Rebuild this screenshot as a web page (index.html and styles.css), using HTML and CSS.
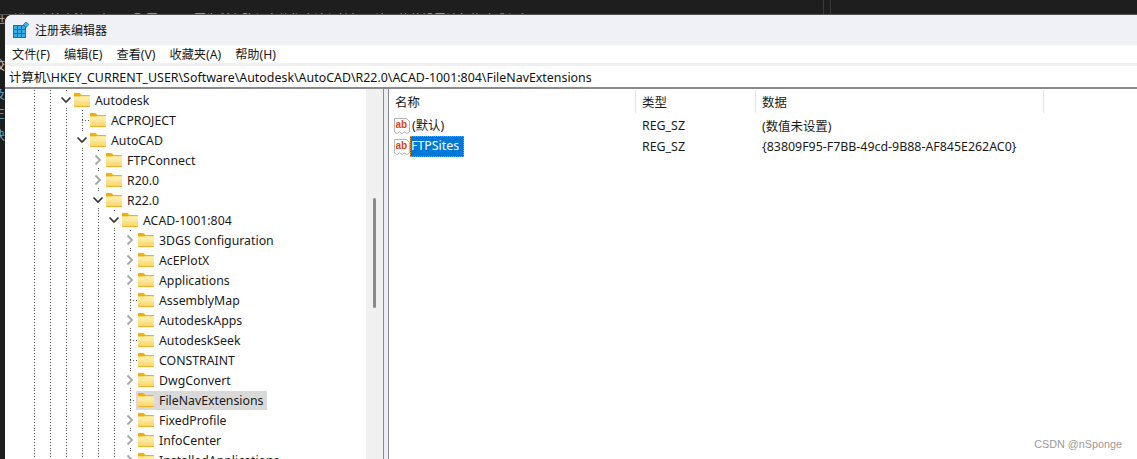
FILE: index.html
```html
<!DOCTYPE html>
<html lang="zh-CN">
<head>
<meta charset="utf-8">
<title>注册表编辑器</title>
<link rel="stylesheet" href="styles.css">
</head>
<body>
<svg class="defs" width="0" height="0" aria-hidden="true">
  <defs>
    <linearGradient id="fg" x1="0" y1="0" x2="0" y2="1">
      <stop offset="0" stop-color="#fff4bd"/>
      <stop offset="1" stop-color="#fbd362"/>
    </linearGradient>
    <symbol id="folder" viewBox="0 0 16 14">
      <path d="M0 1.2C0 .5.5 0 1.2 0h4.3l2 2H15c.6 0 1 .4 1 1v2H0z" fill="#f4b30f"/>
      <path d="M0 3.2h16V13c0 .6-.4 1-1 1H1c-.6 0-1-.4-1-1z" fill="url(#fg)"/>
      <path d="M0 13h16c0 .6-.4 1-1 1H1c-.6 0-1-.4-1-1z" fill="#efb22f"/>
      <path d="M0 3.2h6.5l1-1.2H5.5l-2-2H1.2C.5 0 0 .5 0 1.2z" fill="#f2ac05"/>
    </symbol>
    <symbol id="open" viewBox="0 0 12 12">
      <path d="M1.5 3.5 6 8l4.5-4.5" fill="none" stroke="#333" stroke-width="1.6"/>
    </symbol>
    <symbol id="closed" viewBox="0 0 12 12">
      <path d="M3.5 1.5 8 6l-4.5 4.5" fill="none" stroke="#a6a6a6" stroke-width="1.8"/>
    </symbol>
    <symbol id="ab" viewBox="0 0 16 16">
      <path d="M.5.5h12l3 3V14l-2.500 1.500L10.500 14 8 15.500 5.500 14 3 15.500.5 14z" fill="#fff" stroke="#b5b5b5"/>
      <text x="1.500" y="10" class="ab-text">ab</text>
    </symbol>
  </defs>
</svg>

<header class="backdrop">
  <p class="backdrop-text">进一步检查注册表项目配置显示，因为所有路径文件都应该保持相同结果的值设置请勿修改或保留配置项</p>
  <i class="backdrop-line"></i>
  <i class="backdrop-line second"></i>
</header>

<div class="desk">
  <aside class="edge">
    <span class="e1">进</span>
    <span class="e2">校</span>
    <span class="e3">及</span>
    <span class="e4">正</span>
    <span class="e5">块</span>
  </aside>

  <main class="window">
    <div class="titlebar">
      <svg class="app-icon" width="16" height="16" viewBox="0 0 16 16">
        <rect x="0" y="3" width="13" height="13" fill="#0a74c4"/>
        <g fill="#36ace8">
          <rect x="1" y="4" width="3" height="3"/><rect x="5" y="4" width="3" height="3"/><rect x="9" y="4" width="3" height="3"/>
          <rect x="1" y="8" width="3" height="3"/><rect x="5" y="8" width="3" height="3"/><rect x="9" y="8" width="3" height="3"/>
          <rect x="1" y="12" width="3" height="3"/><rect x="5" y="12" width="3" height="3"/><rect x="9" y="12" width="3" height="3"/>
        </g>
        <path d="M13 0l2.800 2.500L13 5.500 10.500 2.500z" fill="#3fb4ea" stroke="#0a74c4" stroke-width=".8"/>
      </svg>
      <span class="title">注册表编辑器</span>
    </div>
    <nav class="menubar">
      <span>文件(F)</span><span>编辑(E)</span><span>查看(V)</span><span>收藏夹(A)</span><span>帮助(H)</span>
    </nav>
    <div class="address">计算机\HKEY_CURRENT_USER\Software\Autodesk\AutoCAD\R22.0\ACAD-1001:804\FileNavExtensions</div>

    <div class="panes">
      <section class="tree">
        <div class="rows">
          <div class="row"><i class="g"></i><i class="g"></i><i class="tw"><svg><use href="#open"/></svg></i><span class="item"><svg class="fd"><use href="#folder"/></svg><span class="label">Autodesk</span></span></div>
          <div class="row"><i class="g"></i><i class="g"></i><i class="g"></i><i class="lf"></i><span class="item"><svg class="fd"><use href="#folder"/></svg><span class="label">ACPROJECT</span></span></div>
          <div class="row"><i class="g"></i><i class="g"></i><i class="g"></i><i class="tw"><svg><use href="#open"/></svg></i><span class="item"><svg class="fd"><use href="#folder"/></svg><span class="label">AutoCAD</span></span></div>
          <div class="row"><i class="g"></i><i class="g"></i><i class="g"></i><i class="g"></i><i class="tw"><svg><use href="#closed"/></svg></i><span class="item"><svg class="fd"><use href="#folder"/></svg><span class="label">FTPConnect</span></span></div>
          <div class="row"><i class="g"></i><i class="g"></i><i class="g"></i><i class="g"></i><i class="tw"><svg><use href="#closed"/></svg></i><span class="item"><svg class="fd"><use href="#folder"/></svg><span class="label">R20.0</span></span></div>
          <div class="row"><i class="g"></i><i class="g"></i><i class="g"></i><i class="g"></i><i class="tw"><svg><use href="#open"/></svg></i><span class="item"><svg class="fd"><use href="#folder"/></svg><span class="label">R22.0</span></span></div>
          <div class="row"><i class="g"></i><i class="g"></i><i class="g"></i><i class="g"></i><i class="g"></i><i class="tw"><svg><use href="#open"/></svg></i><span class="item"><svg class="fd"><use href="#folder"/></svg><span class="label">ACAD-1001:804</span></span></div>
          <div class="row"><i class="g"></i><i class="g"></i><i class="g"></i><i class="g"></i><i class="g"></i><i class="g"></i><i class="tw"><svg><use href="#closed"/></svg></i><span class="item"><svg class="fd"><use href="#folder"/></svg><span class="label">3DGS Configuration</span></span></div>
          <div class="row"><i class="g"></i><i class="g"></i><i class="g"></i><i class="g"></i><i class="g"></i><i class="g"></i><i class="tw"><svg><use href="#closed"/></svg></i><span class="item"><svg class="fd"><use href="#folder"/></svg><span class="label">AcEPlotX</span></span></div>
          <div class="row"><i class="g"></i><i class="g"></i><i class="g"></i><i class="g"></i><i class="g"></i><i class="g"></i><i class="tw"><svg><use href="#closed"/></svg></i><span class="item"><svg class="fd"><use href="#folder"/></svg><span class="label">Applications</span></span></div>
          <div class="row"><i class="g"></i><i class="g"></i><i class="g"></i><i class="g"></i><i class="g"></i><i class="g"></i><i class="lf"></i><span class="item"><svg class="fd"><use href="#folder"/></svg><span class="label">AssemblyMap</span></span></div>
          <div class="row"><i class="g"></i><i class="g"></i><i class="g"></i><i class="g"></i><i class="g"></i><i class="g"></i><i class="tw"><svg><use href="#closed"/></svg></i><span class="item"><svg class="fd"><use href="#folder"/></svg><span class="label">AutodeskApps</span></span></div>
          <div class="row"><i class="g"></i><i class="g"></i><i class="g"></i><i class="g"></i><i class="g"></i><i class="g"></i><i class="lf"></i><span class="item"><svg class="fd"><use href="#folder"/></svg><span class="label">AutodeskSeek</span></span></div>
          <div class="row"><i class="g"></i><i class="g"></i><i class="g"></i><i class="g"></i><i class="g"></i><i class="g"></i><i class="lf"></i><span class="item"><svg class="fd"><use href="#folder"/></svg><span class="label">CONSTRAINT</span></span></div>
          <div class="row"><i class="g"></i><i class="g"></i><i class="g"></i><i class="g"></i><i class="g"></i><i class="g"></i><i class="tw"><svg><use href="#closed"/></svg></i><span class="item"><svg class="fd"><use href="#folder"/></svg><span class="label">DwgConvert</span></span></div>
          <div class="row"><i class="g"></i><i class="g"></i><i class="g"></i><i class="g"></i><i class="g"></i><i class="g"></i><i class="lf"></i><span class="item selected"><svg class="fd"><use href="#folder"/></svg><span class="label">FileNavExtensions</span></span></div>
          <div class="row"><i class="g"></i><i class="g"></i><i class="g"></i><i class="g"></i><i class="g"></i><i class="g"></i><i class="tw"><svg><use href="#closed"/></svg></i><span class="item"><svg class="fd"><use href="#folder"/></svg><span class="label">FixedProfile</span></span></div>
          <div class="row"><i class="g"></i><i class="g"></i><i class="g"></i><i class="g"></i><i class="g"></i><i class="g"></i><i class="tw"><svg><use href="#closed"/></svg></i><span class="item"><svg class="fd"><use href="#folder"/></svg><span class="label">InfoCenter</span></span></div>
          <div class="row"><i class="g"></i><i class="g"></i><i class="g"></i><i class="g"></i><i class="g"></i><i class="g"></i><i class="tw"><svg><use href="#closed"/></svg></i><span class="item"><svg class="fd"><use href="#folder"/></svg><span class="label">InstalledApplications</span></span></div>
        </div>
        <div class="scrollbar"><i class="thumb"></i></div>
      </section>

      <div class="splitter"></div>

      <section class="list">
        <div class="list-head">
          <span class="c1">名称</span><span class="c2">类型</span><span class="c3">数据</span>
        </div>
        <div class="list-row first">
          <span class="c1"><svg class="ab"><use href="#ab"/></svg><span class="name">(默认)</span></span>
          <span class="c2">REG_SZ</span>
          <span class="c3">(数值未设置)</span>
        </div>
        <div class="list-row">
          <span class="c1"><svg class="ab"><use href="#ab"/></svg><span class="name focused">FTPSites</span></span>
          <span class="c2">REG_SZ</span>
          <span class="c3">{83809F95-F7BB-49cd-9B88-AF845E262AC0}</span>
        </div>
      </section>
    </div>
    <span class="watermark">CSDN @nSponge</span>
  </main>
</div>
</body>
</html>
```

FILE: styles.css
```css
* { box-sizing: border-box; }
html, body { margin: 0; height: 459px; overflow: hidden; }
body {
  background: #1e1e1e;
  font-family: "Noto Sans", "Noto Sans CJK SC", sans-serif;
  font-size: 12px;
  color: #1a1a1a;
  display: flex;
  flex-direction: column;
}
i { display: block; font-style: normal; }
.defs { position: absolute; }
.ab-text { font: bold 10px "Liberation Sans", sans-serif; fill: #d8451a; }

.backdrop {
  height: 15px;
  flex: none;
  position: relative;
  overflow: hidden;
  border-bottom: 1px solid #555;
}
.backdrop-text {
  margin: 0;
  padding-left: 14px;
  position: relative;
  top: 12px;
  font-size: 12px;
  line-height: 16px;
  color: #a8a8a8;
  white-space: nowrap;
  width: 530px;
  overflow: hidden;
}
.backdrop-line {
  position: absolute;
  left: 823px;
  top: 0;
  width: 1px;
  height: 15px;
  background: #3a3a3a;
}
.backdrop-line.second { left: 830px; }

.desk { flex: 1; min-height: 0; display: flex; }
.edge {
  width: 5px;
  flex: none;
  overflow: hidden;
  display: flex;
  flex-direction: column;
  color: #58a8c8;
  font-size: 12px;
  line-height: 16px;
}
.edge span { margin-left: -7px; }
.e1 { margin-top: -4px; color: #a8a8a8; }
.e2 { margin-top: 31px; color: #c9c9c9; }
.e3 { margin-top: 13px; }
.e4 { margin-top: 4px; }
.e5 { margin-top: 5px; }

.window {
  flex: 1;
  min-width: 0;
  display: flex;
  flex-direction: column;
  background: #fff;
  border-top-left-radius: 7px;
  overflow: hidden;
  position: relative;
}

.titlebar {
  height: 30px;
  flex: none;
  background: #eff1f7;
  display: flex;
  align-items: center;
  padding-left: 8px;
  color: #111;
}
.app-icon { flex: none; margin-top: -1px; }
.title { margin-left: 6px; font-size: 12px; }

.menubar {
  height: 18px;
  flex: none;
  display: flex;
  align-items: center;
  padding-left: 7px;
  gap: 14px;
  background: #fff;
  font-size: 12.2px;
}

.address {
  height: 24px;
  flex: none;
  border-top: 3px solid #f0f0f0;
  padding-left: 4px;
  display: flex;
  align-items: center;
  font-size: 12.4px;
  white-space: nowrap;
  color: #111;
}

.panes {
  flex: 1;
  min-height: 0;
  display: flex;
  border-top: 2px solid #8a8a8a;
}

.tree {
  width: 379px;
  flex: none;
  display: flex;
  border-right: 1px solid #8a8a8a;
  overflow: hidden;
}
.rows { flex: 1; padding: 1px 0 0 21px; overflow: hidden; }
.row { height: 20px; display: flex; align-items: center; }
.g, .tw, .lf {
  width: 16px;
  height: 20px;
  flex: none;
  background: repeating-linear-gradient(to bottom, #555 0 1px, transparent 1px 3px) center / 1px 100% no-repeat;
}
.tw { display: flex; align-items: center; justify-content: center; }
.tw svg { width: 12px; height: 14px; background: #fff; }
.lf {
  background:
    repeating-linear-gradient(to bottom, #555 0 1px, transparent 1px 3px) center / 1px 100% no-repeat,
    repeating-linear-gradient(to right, #555 0 1px, transparent 1px 3px) right center / 8px 1px no-repeat;
}
.item {
  display: flex;
  align-items: center;
  height: 19px;
  margin-left: -2px;
  padding: 0 4px 0 2px;
  white-space: nowrap;
}
.fd { width: 16px; height: 14px; flex: none; }
.label { margin-left: 5px; font-size: 12.3px; line-height: 19px; }
.selected { background: #d9d9d9; }

.scrollbar {
  width: 17px;
  flex: none;
  background: #f0f0f0;
  position: relative;
}
.thumb {
  position: absolute;
  left: 7px;
  top: 109px;
  width: 3px;
  height: 110px;
  background: #8b8b8b;
  border-radius: 2px;
}

.splitter {
  width: 5px;
  flex: none;
  background: #eceef5;
  border-right: 1px solid #8a8a8a;
}

.list { flex: 1; min-width: 0; font-size: 12.4px; }
.list-head, .list-row { display: flex; white-space: nowrap; }
.list-head { height: 24px; align-items: center; }
.list-head span { height: 23px; display: flex; align-items: center; border-right: 1px solid #e5e5e5; margin-top: 1px; }
.c1 { width: 247px; padding-left: 6px; flex: none; }
.c2 { width: 120px; padding-left: 6px; flex: none; }
.c3 { width: 288px; padding-left: 6px; flex: none; }
.list-row { height: 21px; align-items: center; }
.list-row.first { margin-top: 2px; }
.list-row .c1 { display: flex; align-items: center; padding-left: 5px; }
.ab { width: 16px; height: 16px; flex: none; }
.name { line-height: 19px; padding: 0 2px; }
.focused {
  height: 21px;
  line-height: 18px;
  padding: 0 4px 0 0;
  background: #0078d7;
  color: #fff;
  border: 1px dotted #f08a24;
}

.watermark {
  position: absolute;
  right: 15px;
  bottom: 9px;
  font-size: 10.8px;
  color: #9a9a9a;
  font-family: "Liberation Sans", sans-serif;
}
```
